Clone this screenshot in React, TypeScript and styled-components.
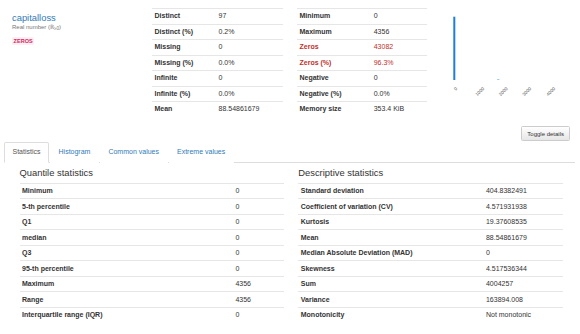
import React from "react";
import styled, { createGlobalStyle } from "styled-components";

const GlobalStyle = createGlobalStyle`
  html, body { margin: 0; padding: 0; background: #fff; }
  body {
    font-family: "Liberation Sans", Helvetica, Arial, sans-serif;
    color: #333;
    width: 580px;
    height: 334px;
    overflow: hidden;
  }
`;

const Page = styled.div`
  width: 580px;
`;

const Header = styled.div`
  display: grid;
  grid-template-columns: 126px 131px 130px 1fr;
  column-gap: 14px;
  align-items: start;
  padding: 8px 4px 0 12px;
`;

const NameCol = styled.div`
  display: flex;
  flex-direction: column;
  align-items: flex-start;
`;

const Title = styled.a`
  margin-top: 4.5px;
  font-size: 9.4px;
  line-height: 1.1;
  color: #337ab7;
  text-decoration: none;
`;

const Subtitle = styled.div`
  font-size: 6px;
  line-height: 8.6px;
  color: #777;
`;

const Sub = styled.sub`
  font-size: 4.5px;
  vertical-align: -1px;
  line-height: 0;
`;

const Badge = styled.span`
  margin-top: 6px;
  font-size: 5.5px;
  font-weight: bold;
  line-height: 7px;
  padding: 0.5px 1.5px;
  border-radius: 1.5px;
  letter-spacing: 0.05px;
  color: #d6245c;
  background: #fbeff3;
  text-transform: uppercase;
`;

const Table = styled.table`
  width: 100%;
  border-collapse: collapse;
  border-spacing: 0;
  font-size: 7px;
`;

const Row = styled.tr<{ $alert?: boolean }>`
  color: ${(p) => (p.$alert ? "#c0302c" : "#333")};
`;

const Label = styled.th`
  text-align: left;
  font-weight: bold;
  padding: 2.25px 2.5px;
  line-height: 10px;
  border-top: 1px solid #e6e6e6;
  white-space: nowrap;
`;

const Value = styled.td`
  padding: 2.25px 2.5px;
  line-height: 10px;
  border-top: 1px solid #e6e6e6;
  white-space: nowrap;
  font-weight: normal;
`;

const HistCol = styled.div`
  display: flex;
`;

const Toolbar = styled.div`
  display: flex;
  justify-content: flex-end;
  padding: 9.5px 10px 0 0;
`;

const ToggleButton = styled.button`
  font-family: inherit;
  font-size: 6px;
  line-height: 9px;
  height: 15px;
  padding: 2.5px 5px;
  color: #333;
  border: 1px solid #ccc;
  border-radius: 1.5px;
  background: linear-gradient(#ffffff, #e6e6e6);
  cursor: pointer;
`;

const TabBar = styled.ul`
  display: flex;
  list-style: none;
  margin: 0.5px 5px 0 4px;
  padding: 0;
  border-bottom: 1px solid #ddd;
`;

const Tab = styled.li<{ $active?: boolean }>`
  margin: 0 1px -1px 0;
  padding: 4.75px 7.5px;
  font-size: 7px;
  line-height: 10px;
  border: 1px solid ${(p) => (p.$active ? "#ddd" : "transparent")};
  border-bottom-color: transparent;
  border-radius: 2px 2px 0 0;
  background: #fff;
  color: ${(p) => (p.$active ? "#555" : "#337ab7")};
`;

const TabContent = styled.div`
  display: grid;
  grid-template-columns: 1fr 1fr;
  column-gap: 14px;
  padding: 0 17px 0 19.5px;
`;

const Section = styled.div`
  display: flex;
  flex-direction: column;
`;

const SectionTitle = styled.h4`
  margin: 4.5px 0 5px 0;
  font-size: 9.4px;
  line-height: 1.1;
  font-weight: normal;
  color: #333;
`;

type Item = [string, string, boolean?];

const StatTable: React.FC<{ items: Item[] }> = ({ items }) => (
  <Table>
    <tbody>
      {items.map(([k, v, alert]) => (
        <Row key={k} $alert={alert}>
          <Label>{k}</Label>
          <Value>{v}</Value>
        </Row>
      ))}
    </tbody>
  </Table>
);

const overviewA: Item[] = [
  ["Distinct", "97"],
  ["Distinct (%)", "0.2%"],
  ["Missing", "0"],
  ["Missing (%)", "0.0%"],
  ["Infinite", "0"],
  ["Infinite (%)", "0.0%"],
  ["Mean", "88.54861679"],
];

const overviewB: Item[] = [
  ["Minimum", "0"],
  ["Maximum", "4356"],
  ["Zeros", "43082", true],
  ["Zeros (%)", "96.3%", true],
  ["Negative", "0"],
  ["Negative (%)", "0.0%"],
  ["Memory size", "353.4 KiB"],
];

const quantile: Item[] = [
  ["Minimum", "0"],
  ["5-th percentile", "0"],
  ["Q1", "0"],
  ["median", "0"],
  ["Q3", "0"],
  ["95-th percentile", "0"],
  ["Maximum", "4356"],
  ["Range", "4356"],
  ["Interquartile range (IQR)", "0"],
];

const descriptive: Item[] = [
  ["Standard deviation", "404.8382491"],
  ["Coefficient of variation (CV)", "4.571931938"],
  ["Kurtosis", "19.37608535"],
  ["Mean", "88.54861679"],
  ["Median Absolute Deviation (MAD)", "0"],
  ["Skewness", "4.517536344"],
  ["Sum", "4004257"],
  ["Variance", "163894.008"],
  ["Monotonicity", "Not monotonic"],
];

const ticks: [string, number][] = [
  ["0", 14.3],
  ["1000", 41.3],
  ["2000", 64.7],
  ["3000", 88.3],
  ["4000", 112.3],
];

const MiniHistogram: React.FC = () => (
  <svg width="134" height="100" viewBox="0 0 134 100">
    <rect x="12.3" y="8.7" width="2" height="63.3" fill="#1f7fd6" />
    <rect x="56.3" y="71.2" width="2" height="0.8" fill="#7fb3e6" />
    {ticks.map(([t, x]) => (
      <text
        key={t}
        x={x}
        y={78.7}
        fontSize="4.6"
        fill="#555"
        textAnchor="end"
        fontFamily="Liberation Sans, Arial, sans-serif"
        transform={`rotate(-45 ${x} 78.7)`}
        dominantBaseline="hanging"
      >
        {t}
      </text>
    ))}
  </svg>
);

export default function App() {
  return (
    <Page>
      <GlobalStyle />
      <Header>
        <NameCol>
          <Title href="#">capitalloss</Title>
          <Subtitle>
            Real number (ℝ<Sub>≥0</Sub>)
          </Subtitle>
          <Badge>Zeros</Badge>
        </NameCol>
        <StatTable items={overviewA} />
        <StatTable items={overviewB} />
        <HistCol>
          <MiniHistogram />
        </HistCol>
      </Header>
      <Toolbar>
        <ToggleButton>Toggle details</ToggleButton>
      </Toolbar>
      <TabBar>
        <Tab $active>Statistics</Tab>
        <Tab>Histogram</Tab>
        <Tab>Common values</Tab>
        <Tab>Extreme values</Tab>
      </TabBar>
      <TabContent>
        <Section>
          <SectionTitle>Quantile statistics</SectionTitle>
          <StatTable items={quantile} />
        </Section>
        <Section>
          <SectionTitle>Descriptive statistics</SectionTitle>
          <StatTable items={descriptive} />
        </Section>
      </TabContent>
    </Page>
  );
}
